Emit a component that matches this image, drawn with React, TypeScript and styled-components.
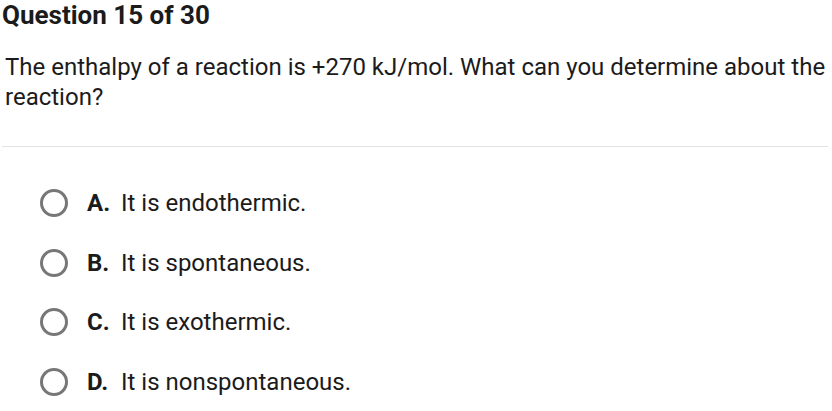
import React from 'react'
import styled, { createGlobalStyle } from 'styled-components'

const GlobalStyle = createGlobalStyle`
  body {
    margin: 0;
    background: #ffffff;
    font-family: Roboto, "Liberation Sans", sans-serif;
    color: #1a1a1a;
  }
`

const Page = styled.div`
  width: 832px;
  padding: 0 4px 0 2px;
  box-sizing: border-box;
`

const Title = styled.h1`
  margin: 0;
  font-size: 26px;
  line-height: 30px;
  font-weight: 700;
  color: #1b1b1b;
`

const Prompt = styled.p`
  margin: 22px 0 0 3px;
  font-size: 24px;
  line-height: 30px;
  font-weight: 400;
  color: #1b1b1b;
`

const Divider = styled.hr`
  margin: 34px 0 0 0;
  border: none;
  border-top: 1px solid #e2e2e2;
  height: 0;
`

const Options = styled.ul`
  list-style: none;
  margin: 40px 0 0 0;
  padding: 0 0 0 38px;
  display: flex;
  flex-direction: column;
  gap: 27.5px;
`

const Option = styled.li`
  display: flex;
  align-items: center;
  height: 32px;
  font-size: 24px;
  color: #1b1b1b;
`

const Radio = styled.span`
  width: 22px;
  height: 22px;
  border: 3px solid #777777;
  border-radius: 50%;
  flex-shrink: 0;
`

const Letter = styled.b`
  margin-left: 19px;
  width: 34px;
  font-weight: 700;
`

const options = [
  { letter: 'A.', text: 'It is endothermic.' },
  { letter: 'B.', text: 'It is spontaneous.' },
  { letter: 'C.', text: 'It is exothermic.' },
  { letter: 'D.', text: 'It is nonspontaneous.' },
]

export default function App() {
  return (
    <>
      <GlobalStyle />
      <Page>
        <Title>Question 15 of 30</Title>
        <Prompt>The enthalpy of a reaction is +270 kJ/mol. What can you determine about the reaction?</Prompt>
        <Divider />
        <Options>
          {options.map((o) => (
            <Option key={o.letter}>
              <Radio />
              <Letter>{o.letter}</Letter>
              <span>{o.text}</span>
            </Option>
          ))}
        </Options>
      </Page>
    </>
  )
}
